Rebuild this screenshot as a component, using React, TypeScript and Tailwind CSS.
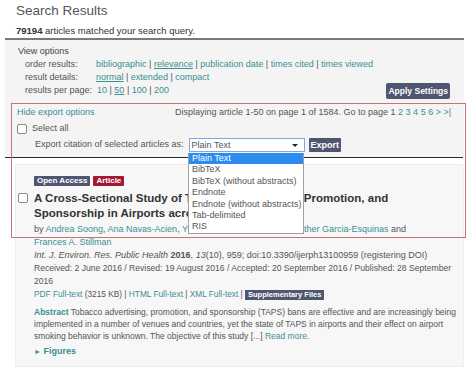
import React from "react";

const link = "text-[#3a8f93]";

function Box() {
  return <span className="inline-block w-[10px] h-[10px] bg-white border border-[#8a8a8a] rounded-[2px] shrink-0" />;
}

function Sep() {
  return <span className="text-[#555]"> | </span>;
}

function Badge({ label, color }: { label: string; color: string }) {
  return (
    <span className={`inline-block h-[10px] px-[3px] text-[8px] leading-[10px] font-bold text-white rounded-[1px] ${color}`}>
      {label}
    </span>
  );
}

const formats = [
  "Plain Text",
  "BibTeX",
  "BibTeX (without abstracts)",
  "Endnote",
  "Endnote (without abstracts)",
  "Tab-delimited",
  "RIS",
];

export default function App() {
  return (
    <div className="relative w-[474px] h-[369px] overflow-hidden bg-white text-[9px] text-[#555] font-['Liberation_Sans',Arial,sans-serif]">
      <h1 className="h-[24px] pl-4 text-[13.5px] leading-[22px] text-[#555]">Search Results</h1>
      <p className="h-[13px] pl-4 text-[9.5px] leading-[13px] text-[#333]">
        <b>79194</b> articles matched your search query.
      </p>

      {/* view + export options */}
      <div className="mt-px ml-[5px] w-[459px] border-t-2 border-[#7a7a7a] bg-[#f4f4f4] px-[12px] pt-[5px] pb-[5px]">
        <div className="h-[13px] leading-[13px] pl-px text-[#444]">View options</div>
        <div className="flex h-[13px] leading-[13px] pl-[8px]">
          <span className="w-[71px]">order results:</span>
          <span>
            <span className={link}>bibliographic</span>
            <Sep />
            <span className={`${link} underline`}>relevance</span>
            <Sep />
            <span className={link}>publication date</span>
            <Sep />
            <span className={link}>times cited</span>
            <Sep />
            <span className={link}>times viewed</span>
          </span>
        </div>
        <div className="flex h-[13px] leading-[13px] pl-[8px]">
          <span className="w-[71px]">result details:</span>
          <span>
            <span className={`${link} underline`}>normal</span>
            <Sep />
            <span className={link}>extended</span>
            <Sep />
            <span className={link}>compact</span>
          </span>
        </div>
        <div className="flex items-center justify-between h-[13px] leading-[13px] pl-[8px] pr-[2px]">
          <span className="flex">
            <span className="w-[72px]">results per page:</span>
            <span>
              <span className={link}>10</span>
              <Sep />
              <span className={`${link} underline`}>50</span>
              <Sep />
              <span className={link}>100</span>
              <Sep />
              <span className={link}>200</span>
            </span>
          </span>
          <span className="h-[16px] px-[2px] bg-[#4f5671] text-white font-bold text-[8.5px] leading-[16px] rounded-[2px]">
            Apply Settings
          </span>
        </div>

        <div className="mt-[9px] flex justify-between h-[13px] leading-[13px] pr-[1px]">
          <span className={link}>Hide export options</span>
          <span>
            Displaying article 1-50 on page 1 of 1584. Go to page 1{" "}
            <span className={link}>2 3 4 5 6 &gt; &gt;|</span>
          </span>
        </div>
        <div className="mt-[3px] flex items-center gap-[5px] h-[13px] leading-[13px]">
          <Box />
          <span>Select all</span>
        </div>
        <div className="mt-[3px] ml-[18px] flex items-center h-[14px]">
          <span>Export citation of selected articles as:</span>
          <span className="ml-[5px] w-[116px] h-[14px] flex items-center justify-between bg-white border border-[#7fa9dc] pl-[2px] pr-[6px]">
            <span className="leading-[12px]">Plain Text</span>
            <span className="w-0 h-0 border-l-[3px] border-r-[3px] border-t-[3px] border-l-transparent border-r-transparent border-t-[#222]" />
          </span>
          <span className="ml-[4px] h-[14px] px-[2px] bg-[#4f5671] text-white font-bold leading-[14px] rounded-[1px]">
            Export
          </span>
        </div>
      </div>
      <div className="ml-[5px] w-[458px] h-px bg-[#2a2a2a]" />

      {/* article card */}
      <div className="mt-[6px] ml-[15px] w-[449px] bg-[#f7f7f7] border border-[#eeeeee] pl-[2px] pt-[11px] pb-[8px]">
        <div className="ml-[16px] flex gap-[3px]">
          <Badge label="Open Access" color="bg-[#4f5671]" />
          <Badge label="Article" color="bg-[#a3192f]" />
        </div>
        <div className="mt-[5px] flex gap-[6px]">
          <span className="mt-[2px]">
            <Box />
          </span>
          <h2 className="w-[405px] text-[11.5px] leading-[14.5px] font-bold text-[#333]">
            A Cross-Sectional Study of Tobacco Advertising, Promotion, and Sponsorship in Airports across the United States
          </h2>
        </div>
        <div className="ml-[16px] mt-[3px] w-[425px] leading-[13px] whitespace-nowrap">
          <p>
            by <span className={link}>Andrea Soong</span>, <span className={link}>Ana Navas-Acien</span>,{" "}
            <span className={link}>Yuan Tang</span>, <span className={link}>Maria J. López</span>,{" "}
            <span className={link}>Esther Garcia-Esquinas</span> and
            <br />
            <span className={link}>Frances A. Stillman</span>
          </p>
          <p>
            <i>Int. J. Environ. Res. Public Health</i> <b>2016</b>, <i>13</i>(10), 959; doi:10.3390/ijerph13100959
            (registering DOI)
          </p>
          <p className="text-[8.6px]">
            Received: 2 June 2016 / Revised: 19 August 2016 / Accepted: 20 September 2016 / Published: 28 September
            <br />
            2016
          </p>
          <p className="flex items-center text-[8.3px]">
            <span className={link}>PDF Full-text</span>
            <span className="whitespace-pre"> (3215 KB) | </span>
            <span className={link}>HTML Full-text</span>
            <span className="whitespace-pre"> | </span>
            <span className={link}>XML Full-text</span>
            <span className="whitespace-pre"> | </span>
            <span className="h-[10px] px-[3px] bg-[#4f5671] text-white font-bold text-[7.5px] leading-[10px]">
              Supplementary Files
            </span>
          </p>
          <p className="mt-[5px] text-[8.5px] leading-[12px]">
            <b className={link}>Abstract</b> Tobacco advertising, promotion, and sponsorship (TAPS) bans are effective
            and are increasingly being
            <br />
            implemented in a number of venues and countries, yet the state of TAPS in airports and their effect on
            airport
            <br />
            smoking behavior is unknown. The objective of this study [...] <span className={link}>Read more.</span>
          </p>
          <p className={`mt-[3px] leading-[12px] font-bold ${link}`}>
            <span className="text-[7px]">►</span> Figures
          </p>
        </div>
      </div>

      {/* open select list */}
      <div className="absolute left-[188px] top-[153px] w-[116px] bg-white border border-t-0 border-[#a0a0a0]">
        {formats.map((f, i) => (
          <div
            key={f}
            className={`h-[11.4px] pl-[3px] leading-[11.4px] whitespace-nowrap ${
              i === 0 ? "bg-[#2b8cee] text-white" : "text-[#555]"
            }`}
          >
            {f}
          </div>
        ))}
      </div>

      {/* annotation frame */}
      <div className="absolute left-[11px] top-[103px] w-[455px] h-[135px] border-[1.5px] border-[#c87272] pointer-events-none" />
    </div>
  );
}
